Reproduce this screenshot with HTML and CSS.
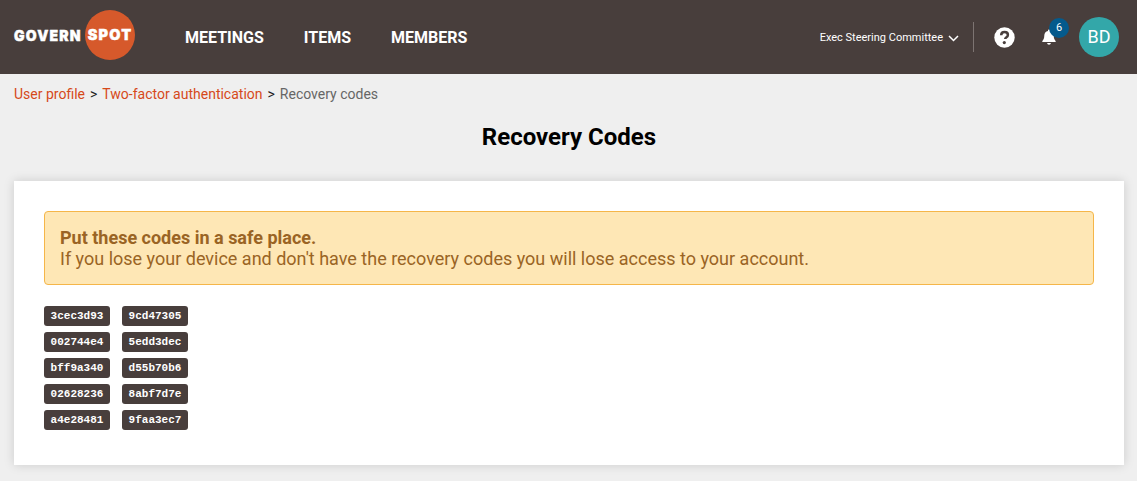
FILE: index.html
```html
<!DOCTYPE html>
<html lang="en">
<head>
    <meta charset="UTF-8">
    <title>Recovery Codes</title>
    <link rel="stylesheet" href="styles.css">
</head>
<body>
    <!-- Top navigation -->
    <header class="topbar">
        <div class="logo">
            <span class="logo-govern">GOVERN</span>
            <span class="logo-spot">SPOT</span>
        </div>
        <nav class="main-nav">
            <a href="#">MEETINGS</a>
            <a href="#">ITEMS</a>
            <a href="#">MEMBERS</a>
        </nav>
        <div class="user-area">
            <div class="committee">
                <span>Exec Steering Committee</span>
                <svg class="chevron" width="11" height="7" viewBox="0 0 11 7"><path d="M1 1l4.500 4.500L10 1" fill="none" stroke="#fff" stroke-width="1.500"/></svg>
            </div>
            <div class="divider"></div>
            <svg class="help-icon" width="21" height="21" viewBox="0 0 21 21">
                <circle cx="10.500" cy="10.500" r="10.200" fill="#fff"/>
                <path d="M7.200 8.200c0-2 1.500-3.200 3.400-3.200 1.900 0 3.300 1.200 3.300 2.900 0 1.400-.8 2-1.700 2.600-.7.500-1 .8-1 1.600" fill="none" stroke="#483e3c" stroke-width="2.500"/>
                <circle cx="10.300" cy="15.600" r="1.600" fill="#483e3c"/>
            </svg>
            <div class="bell">
                <svg width="14" height="16" viewBox="0 0 14 16">
                    <path d="M7 0.500c-.6 0-1 .4-1 1v.6C3.700 2.600 2.300 4.400 2.300 6.600c0 3.200-1 4.300-1.900 5.300-.3.400-.1 1 .5 1h12.200c.6 0 .8-.6.500-1-.9-1-1.900-2.100-1.900-5.300 0-2.200-1.400-4-3.700-4.500v-.6c0-.6-.4-1-1-1z" fill="#fff"/>
                    <path d="M5.200 14c0 1 .8 1.700 1.800 1.700s1.800-.7 1.800-1.700z" fill="#fff"/>
                </svg>
                <span class="badge">6</span>
            </div>
            <div class="avatar">BD</div>
        </div>
    </header>

    <!-- Breadcrumbs -->
    <div class="breadcrumbs">
        <a href="#">User profile</a>
        <span class="sep">&gt;</span>
        <a href="#">Two-factor authentication</a>
        <span class="sep">&gt;</span>
        <span class="current">Recovery codes</span>
    </div>

    <h1>Recovery Codes</h1>

    <main class="card">
        <div class="alert">
            <strong>Put these codes in a safe place.</strong>
            <p>If you lose your device and don't have the recovery codes you will lose access to your account.</p>
        </div>
        <div class="codes">
            <code>3cec3d93</code><code>9cd47305</code>
            <code>002744e4</code><code>5edd3dec</code>
            <code>bff9a340</code><code>d55b70b6</code>
            <code>02628236</code><code>8abf7d7e</code>
            <code>a4e28481</code><code>9faa3ec7</code>
        </div>
    </main>
</body>
</html>
```

FILE: styles.css
```css
/* Page */
body {
    margin: 0;
    height: 481px;
    overflow: hidden;
    background-color: #efefef;
    font-family: Roboto, "Liberation Sans", sans-serif;
    color: #000;
}

a {
    text-decoration: none;
}

/* Top bar */
.topbar {
    display: flex;
    align-items: center;
    height: 74px;
    padding: 0 18px 0 14px;
    background-color: #483e3c;
    color: #fff;
}

.logo {
    display: flex;
    align-items: center;
    width: 120px;
    height: 50px;
    margin-top: -4px;
    font-family: Inter, Roboto, sans-serif;
    font-weight: 900;
    font-size: 14px;
    letter-spacing: 1.2px;
    -webkit-text-stroke: 0.4px #fff;
}

.logo-govern {
    width: 71px;
    flex: none;
}

.logo-spot {
    display: flex;
    align-items: center;
    justify-content: center;
    flex: none;
    width: 50px;
    height: 50px;
    padding-bottom: 2px;
    box-sizing: border-box;
    border-radius: 50%;
    background-color: #d6592b;
    font-size: 14.5px;
}

.main-nav {
    display: flex;
    gap: 40px;
    margin-left: 51px;
}

.main-nav a {
    color: #fff;
    font-size: 16px;
    font-weight: 700;
}

.user-area {
    display: flex;
    align-items: center;
    margin-left: auto;
}

.committee {
    display: flex;
    align-items: center;
    gap: 5px;
    font-size: 11px;
}

.chevron {
    margin-top: 2px;
}

.divider {
    width: 1px;
    height: 30px;
    margin: 0 20px 0 14px;
    background-color: #7d7472;
}

.bell {
    position: relative;
    display: flex;
    margin-left: 27px;
    margin-right: 23px;
}

.badge {
    position: absolute;
    top: -11px;
    left: 7px;
    width: 20px;
    height: 20px;
    border-radius: 50%;
    background-color: #055a8c;
    font-size: 11px;
    line-height: 20px;
    text-align: center;
}

.avatar {
    width: 40px;
    height: 40px;
    border-radius: 50%;
    background-color: #33a7a9;
    font-size: 18px;
    line-height: 40px;
    text-align: center;
}

/* Breadcrumbs */
.breadcrumbs {
    display: flex;
    gap: 5px;
    padding: 12px 14px 0;
    font-size: 14px;
    line-height: 16px;
}

.breadcrumbs a {
    color: #d6491a;
}

.sep {
    color: #222;
}

.current {
    color: #666;
}

h1 {
    margin: 21px 0 0;
    padding-left: 1px;
    font-size: 24px;
    font-weight: 700;
    line-height: 29px;
    text-align: center;
}

/* Main card */
.card {
    height: 224px;
    margin: 29px 13px 0 14px;
    padding: 30px;
    background-color: #fff;
    box-shadow: 0 0 10px rgba(0, 0, 0, 0.15);
}

.alert {
    box-sizing: border-box;
    height: 74px;
    padding: 0 15px;
    display: flex;
    flex-direction: column;
    justify-content: center;
    border: 1px solid #f5b649;
    border-radius: 4px;
    background-color: #fee7b5;
    color: #9a6424;
    font-size: 18px;
    line-height: 21px;
}

.alert strong {
    font-weight: 700;
}

.alert p {
    margin: 0;
}

/* Recovery code chips */
.codes {
    display: grid;
    grid-template-columns: 66px 66px;
    grid-auto-rows: 20px;
    gap: 6px 12px;
    margin-top: 21px;
}

.codes code {
    border-radius: 3px;
    background-color: #483e3c;
    color: #fff;
    font-family: "Liberation Mono", monospace;
    font-size: 11px;
    font-weight: 700;
    line-height: 20px;
    text-align: center;
}
```
